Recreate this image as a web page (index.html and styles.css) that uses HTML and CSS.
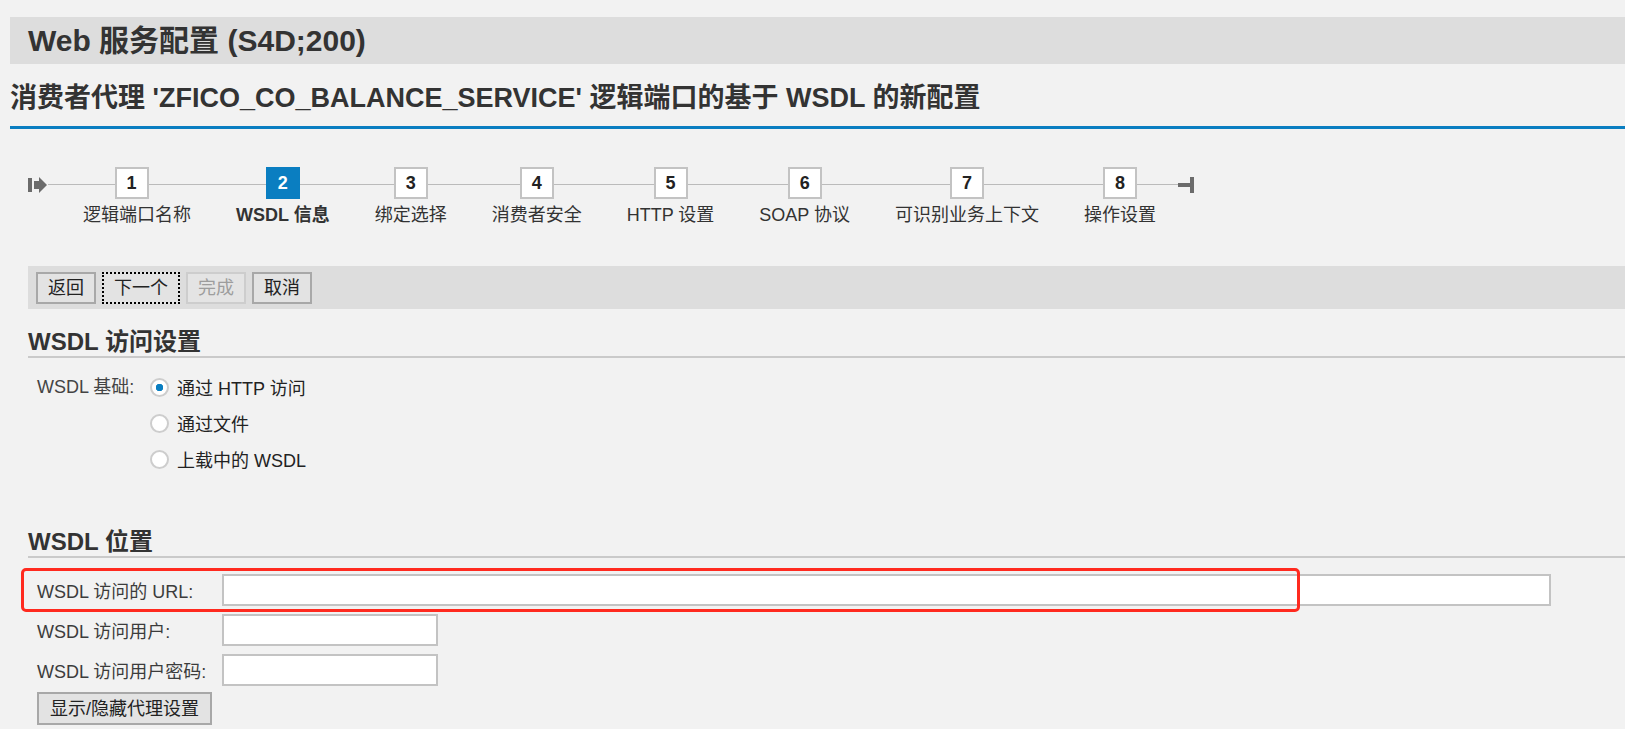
FILE: index.html
```html
<!DOCTYPE html>
<html lang="zh-CN">
<head>
    <meta charset="UTF-8">
    <title>Web 服务配置 (S4D;200)</title>
    <link rel="stylesheet" href="styles.css">
</head>
<body>
    <div class="app-title">Web 服务配置 (S4D;200)</div>
    <h1 class="page-title">消费者代理 'ZFICO_CO_BALANCE_SERVICE' 逻辑端口的基于 WSDL 的新配置</h1>

    <div class="content">
        <!-- roadmap -->
        <div class="roadmap">
            <svg class="rm-start" width="20" height="16" viewBox="0 0 20 16">
                <rect x="0" y="1" width="4" height="14" fill="#6b6b6b"/>
                <path d="M6 4 H11 V0 L19 8 L11 16 V12 H6 Z" fill="#6b6b6b"/>
            </svg>
            <ol class="rm-steps">
                <li class="rm-step first"><span class="rm-num">1</span><span class="rm-label">逻辑端口名称</span></li>
                <li class="rm-step active"><span class="rm-num">2</span><span class="rm-label">WSDL 信息</span></li>
                <li class="rm-step"><span class="rm-num">3</span><span class="rm-label">绑定选择</span></li>
                <li class="rm-step"><span class="rm-num">4</span><span class="rm-label">消费者安全</span></li>
                <li class="rm-step"><span class="rm-num">5</span><span class="rm-label">HTTP 设置</span></li>
                <li class="rm-step"><span class="rm-num">6</span><span class="rm-label">SOAP 协议</span></li>
                <li class="rm-step"><span class="rm-num">7</span><span class="rm-label">可识别业务上下文</span></li>
                <li class="rm-step"><span class="rm-num">8</span><span class="rm-label">操作设置</span></li>
            </ol>
            <svg class="rm-end" width="16" height="16" viewBox="0 0 16 16">
                <rect x="0" y="6" width="12" height="4" fill="#6b6b6b"/>
                <rect x="12" y="0" width="4" height="16" fill="#6b6b6b"/>
            </svg>
        </div>

        <div class="toolbar">
            <button class="btn">返回</button>
            <button class="btn focused">下一个</button>
            <button class="btn" disabled>完成</button>
            <button class="btn">取消</button>
        </div>

        <h2 class="section-title">WSDL 访问设置</h2>
        <div class="radio-group">
            <div class="radio-caption">WSDL 基础:</div>
            <div class="radio-list">
                <label class="radio"><input type="radio" name="wsdl-base" checked>通过 HTTP 访问</label>
                <label class="radio"><input type="radio" name="wsdl-base">通过文件</label>
                <label class="radio"><input type="radio" name="wsdl-base">上载中的 WSDL</label>
            </div>
        </div>

        <h2 class="section-title loc">WSDL 位置</h2>
        <div class="form-row">
            <label class="field-label">WSDL 访问的 URL:</label>
            <input type="text" class="field long">
            <span class="mark"></span>
        </div>
        <div class="form-row">
            <label class="field-label">WSDL 访问用户:</label>
            <input type="text" class="field">
        </div>
        <div class="form-row">
            <label class="field-label">WSDL 访问用户密码:</label>
            <input type="password" class="field">
        </div>
        <button class="btn proxy">显示/隐藏代理设置</button>
    </div>
</body>
</html>
```

FILE: styles.css
```css
body {
    margin: 0;
    padding: 17px 0 0 10px;
    background: #f2f2f2;
    color: #333;
    font-family: "Liberation Sans", "Noto Sans CJK SC", sans-serif;
    font-size: 18px;
}
.app-title {
    height: 47px;
    line-height: 47px;
    padding-left: 18px;
    background: #dddddd;
    font-size: 30px;
    font-weight: bold;
    color: #333;
}
.page-title {
    margin: 16px 0 0;
    padding-bottom: 10px;
    line-height: 36px;
    font-size: 27px;
    font-weight: bold;
    color: #333;
    border-bottom: 3px solid #0a7ec1;
}
.content {
    margin-left: 18px;
}

/* roadmap */
.roadmap {
    position: relative;
    display: flex;
    align-items: flex-start;
    width: max-content;
    margin-top: 38px;
}
.roadmap::before {
    content: "";
    position: absolute;
    left: 20px;
    right: 16px;
    top: 17px;
    height: 1px;
    background: #bbbbbb;
}
.rm-start, .rm-end {
    position: relative;
    margin-top: 10px;
    flex: none;
}
.rm-steps {
    display: flex;
    gap: 45px;
    margin: 0 22px 0 35px;
    padding: 0;
    list-style: none;
}
.rm-step {
    display: flex;
    flex-direction: column;
    align-items: center;
}
.rm-num {
    position: relative;
    width: 34px;
    height: 32px;
    box-sizing: border-box;
    border: 2px solid #c3c3c3;
    background: #fff;
    font-weight: bold;
    font-size: 18px;
    line-height: 28px;
    text-align: center;
    color: #222;
}
.rm-step.first .rm-num {
    margin-right: 11px;
}
.rm-step.active .rm-num {
    background: #0a7ec1;
    border-color: #0a7ec1;
    color: #fff;
}
.rm-label {
    margin-top: 5px;
    line-height: 22px;
    white-space: nowrap;
    color: #333;
}
.rm-step.active .rm-label {
    font-weight: bold;
}

/* toolbar */
.toolbar {
    display: flex;
    gap: 6px;
    margin-top: 40px;
    padding: 6px 8px 5px;
    background: #dddddd;
}
.btn {
    height: 32px;
    padding: 0 10px;
    border: 2px solid #a8a8a8;
    background: #e3e3e3;
    color: #222;
    font-family: inherit;
    font-size: 18px;
    line-height: 28px;
}
.btn.focused {
    border: 2px dotted #000;
}
.btn:disabled {
    color: #9d9d9d;
    border-color: #cdcdcd;
    background: #e4e4e4;
}

/* sections */
.section-title {
    margin: 19px 0 0;
    line-height: 28px;
    font-size: 24px;
    font-weight: bold;
    color: #333;
    border-bottom: 2px solid #cacaca;
}
.section-title.loc {
    margin-top: 51px;
}
.radio-group {
    display: flex;
    margin-top: 11px;
    padding-left: 9px;
}
.radio-caption {
    width: 113px;
    line-height: 36px;
    color: #444;
}
.radio {
    display: flex;
    align-items: center;
    height: 36px;
    color: #222;
}
.radio input {
    appearance: none;
    width: 19px;
    height: 19px;
    margin: 0 8px 0 0;
    border: 2px solid #cdcdcd;
    border-radius: 50%;
    background: #fff;
    box-sizing: border-box;
}
.radio input:checked {
    background: radial-gradient(circle, #0a7ec1 0 3.5px, #fff 4px);
}

/* form */
.form-row {
    position: relative;
    display: flex;
    align-items: center;
    height: 32px;
    margin-top: 8px;
    padding-left: 9px;
}
.section-title + .form-row {
    margin-top: 16px;
}
.field-label {
    width: 185px;
    flex: none;
    color: #3c3c3c;
}
.field {
    width: 216px;
    height: 32px;
    box-sizing: border-box;
    border: 2px solid #c3c3c3;
    background: #fff;
    font-family: inherit;
    font-size: 16px;
}
.field.long {
    width: 1329px;
}
.mark {
    position: absolute;
    left: -7px;
    top: -6px;
    width: 1279px;
    height: 44px;
    box-sizing: border-box;
    border: 3px solid #ff2a1f;
    border-radius: 5px;
    pointer-events: none;
}
.btn.proxy {
    margin: 6px 0 0 9px;
    height: 33px;
    padding: 0 11px;
}
```
